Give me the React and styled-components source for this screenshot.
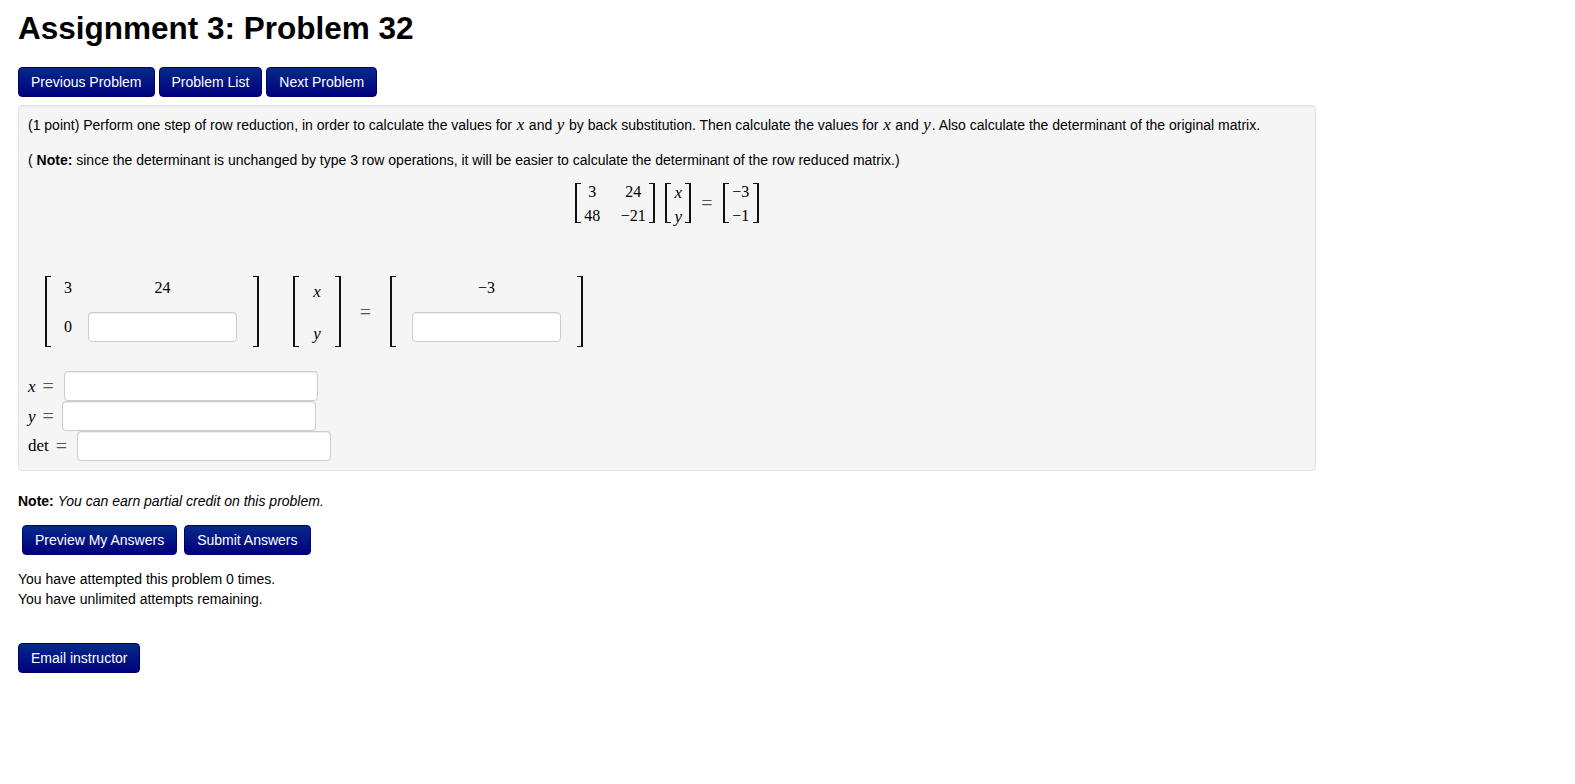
import React from 'react'
import styled, { createGlobalStyle } from 'styled-components'

const GlobalStyle = createGlobalStyle`
  html, body {
    margin: 0;
    padding: 0;
    background: #fff;
  }
  body {
    font-family: "Liberation Sans", Arial, sans-serif;
    font-size: 14px;
    line-height: 20px;
    color: #000;
  }
`

const Page = styled.div`
  width: 1298px;
  padding: 0 18px;
`

const Title = styled.h1`
  margin: 0;
  padding-top: 8px;
  height: 67px;
  box-sizing: border-box;
  font-size: 31.5px;
  line-height: 40px;
  font-weight: 700;
`

const ButtonRow = styled.div`
  display: flex;
  gap: ${p => p.$gap || 4}px;
  padding-left: ${p => p.$inset || 0}px;
  margin-top: ${p => p.$top || 0}px;
`

const Button = styled.a`
  display: block;
  box-sizing: border-box;
  height: 30px;
  padding: 4px 12px;
  border: 1px solid #00006f;
  border-radius: 4px;
  background: linear-gradient(to bottom, #062a88, #00007f);
  color: #fff;
  font-size: 14px;
  line-height: 20px;
  cursor: pointer;
`

const Well = styled.div`
  box-sizing: border-box;
  margin-top: 8px;
  height: 366px;
  padding: 9px;
  background: #f5f5f5;
  border: 1px solid #e3e3e3;
  border-radius: 4px;
  box-shadow: inset 0 1px 1px rgba(0, 0, 0, 0.05);
`

const Para = styled.p`
  margin: 0 0 15px;
`

const Mi = styled.i`
  font-family: "Liberation Serif", "Times New Roman", serif;
  font-size: 17px;
  font-style: italic;
  line-height: 1;
  padding: 0 ${p => (p.$text ? 0.75 : 0)}px;
`

const Display = styled.div`
  display: flex;
  justify-content: center;
  gap: 10px;
  height: 40px;
  margin-top: -2px;
  font-family: "Liberation Serif", "Times New Roman", serif;
  font-size: 16px;
  line-height: 18px;
`

const Bracket = styled.span`
  flex: none;
  width: ${p => p.$w || 6}px;
  box-sizing: border-box;
  border: solid #111;
  border-width: 1px 0;
  border-${p => (p.$right ? 'right' : 'left')}-width: 2px;
`

const Matrix = styled.span`
  display: inline-flex;
  align-items: stretch;
  height: ${p => p.$h || 40}px;
`

const Cells = styled.span`
  display: grid;
  box-sizing: border-box;
  grid-template-columns: ${p => p.$cols};
  grid-template-rows: ${p => p.$rows};
  column-gap: ${p => p.$colGap || 0}px;
  row-gap: ${p => p.$rowGap || 0}px;
  align-items: center;
  justify-items: center;
  padding: ${p => p.$pad || 0};
`

const Equals = styled.span`
  color: #555;
  font-size: 20px;
  line-height: 1;
  align-self: center;
`

const BigMath = styled.div`
  display: flex;
  align-items: stretch;
  height: 71px;
  margin: 53px 0 0 17px;
  font-family: "Liberation Serif", "Times New Roman", serif;
  font-size: 16px;
`

const BigEquals = styled(Equals)`
  width: 49px;
  text-align: center;
`

const Spacer = styled.span`
  width: ${p => p.$w}px;
  flex: none;
`

const Input = styled.input`
  box-sizing: border-box;
  display: block;
  width: ${p => p.$w || 149}px;
  height: 30px;
  margin: 0;
  padding: 4px 6px;
  background: #fff;
  border: 1px solid #ccc;
  border-radius: 4px;
  box-shadow: inset 0 1px 1px rgba(0, 0, 0, 0.075);
`

const Answers = styled.div`
  margin-top: 24px;
  font-family: "Liberation Serif", "Times New Roman", serif;
  font-size: 17px;
`

const AnswerRow = styled.div`
  display: flex;
  align-items: center;
  height: 30px;
`

const AnswerLabel = styled.span`
  display: flex;
  align-items: center;
  gap: 7px;
  width: ${p => p.$w}px;
  flex: none;
`

const NoteLine = styled.p`
  margin: 20px 0 0;
  em {
    font-style: italic;
  }
`

const Attempts = styled.p`
  margin: 14px 0 0;
`

export default function App() {
  return (
    <>
      <GlobalStyle />
      <Page>
        <Title>Assignment 3: Problem 32</Title>

        <ButtonRow>
          <Button>Previous Problem</Button>
          <Button>Problem List</Button>
          <Button>Next Problem</Button>
        </ButtonRow>

        <Well>
          <Para>
            (1 point) Perform one step of row reduction, in order to calculate the values for <Mi $text>x</Mi> and <Mi $text>y</Mi> by back substitution. Then calculate the values for <Mi $text>x</Mi> and <Mi $text>y</Mi>. Also calculate the determinant of the original matrix.
          </Para>
          <Para>
            ( <b>Note:</b> since the determinant is unchanged by type 3 row operations, it will be easier to calculate the determinant of the row reduced matrix.)
          </Para>

          <Display>
            <Matrix>
              <Bracket />
              <Cells $cols="22px 32px" $colGap={14} $rows="18px 18px" $rowGap={6}>
                <span>3</span><span>24</span>
                <span>48</span><span>−21</span>
              </Cells>
              <Bracket $right />
            </Matrix>
            <Matrix>
              <Bracket />
              <Cells $cols="14px" $rows="18px 18px" $rowGap={6}>
                <Mi>x</Mi>
                <Mi>y</Mi>
              </Cells>
              <Bracket $right />
            </Matrix>
            <Equals>=</Equals>
            <Matrix>
              <Bracket />
              <Cells $cols="24px" $rows="18px 18px" $rowGap={6}>
                <span>−3</span>
                <span>−1</span>
              </Cells>
              <Bracket $right />
            </Matrix>
          </Display>

          <BigMath>
            <Matrix $h={71}>
              <Bracket />
              <Cells $cols="34px 149px" $colGap={3} $rows="24px 30px" $rowGap={12} $pad="0 16px 0 0">
                <span>3</span><span>24</span>
                <span>0</span><Input />
              </Cells>
              <Bracket $right />
            </Matrix>
            <Spacer $w={34} />
            <Matrix $h={71}>
              <Bracket />
              <Cells $cols="36px" $rows="22px 22px" $rowGap={20} $pad="4px 0 0">
                <Mi>x</Mi>
                <Mi>y</Mi>
              </Cells>
              <Bracket $right />
            </Matrix>
            <BigEquals>=</BigEquals>
            <Matrix $h={71}>
              <Bracket />
              <Cells $cols="149px" $rows="24px 30px" $rowGap={12} $pad="0 16px">
                <span>−3</span>
                <Input />
              </Cells>
              <Bracket $right />
            </Matrix>
          </BigMath>

          <Answers>
            <AnswerRow>
              <AnswerLabel $w={36}><Mi>x</Mi><Equals>=</Equals></AnswerLabel>
              <Input $w={254} />
            </AnswerRow>
            <AnswerRow>
              <AnswerLabel $w={34}><Mi>y</Mi><Equals>=</Equals></AnswerLabel>
              <Input $w={254} />
            </AnswerRow>
            <AnswerRow>
              <AnswerLabel $w={49}>det<Equals>=</Equals></AnswerLabel>
              <Input $w={254} />
            </AnswerRow>
          </Answers>
        </Well>

        <NoteLine>
          <b>Note:</b> <em>You can earn partial credit on this problem.</em>
        </NoteLine>

        <ButtonRow $inset={4} $gap={7} $top={14}>
          <Button>Preview My Answers</Button>
          <Button>Submit Answers</Button>
        </ButtonRow>

        <Attempts>
          You have attempted this problem 0 times.<br />
          You have unlimited attempts remaining.
        </Attempts>

        <ButtonRow $top={34}>
          <Button>Email instructor</Button>
        </ButtonRow>
      </Page>
    </>
  )
}
